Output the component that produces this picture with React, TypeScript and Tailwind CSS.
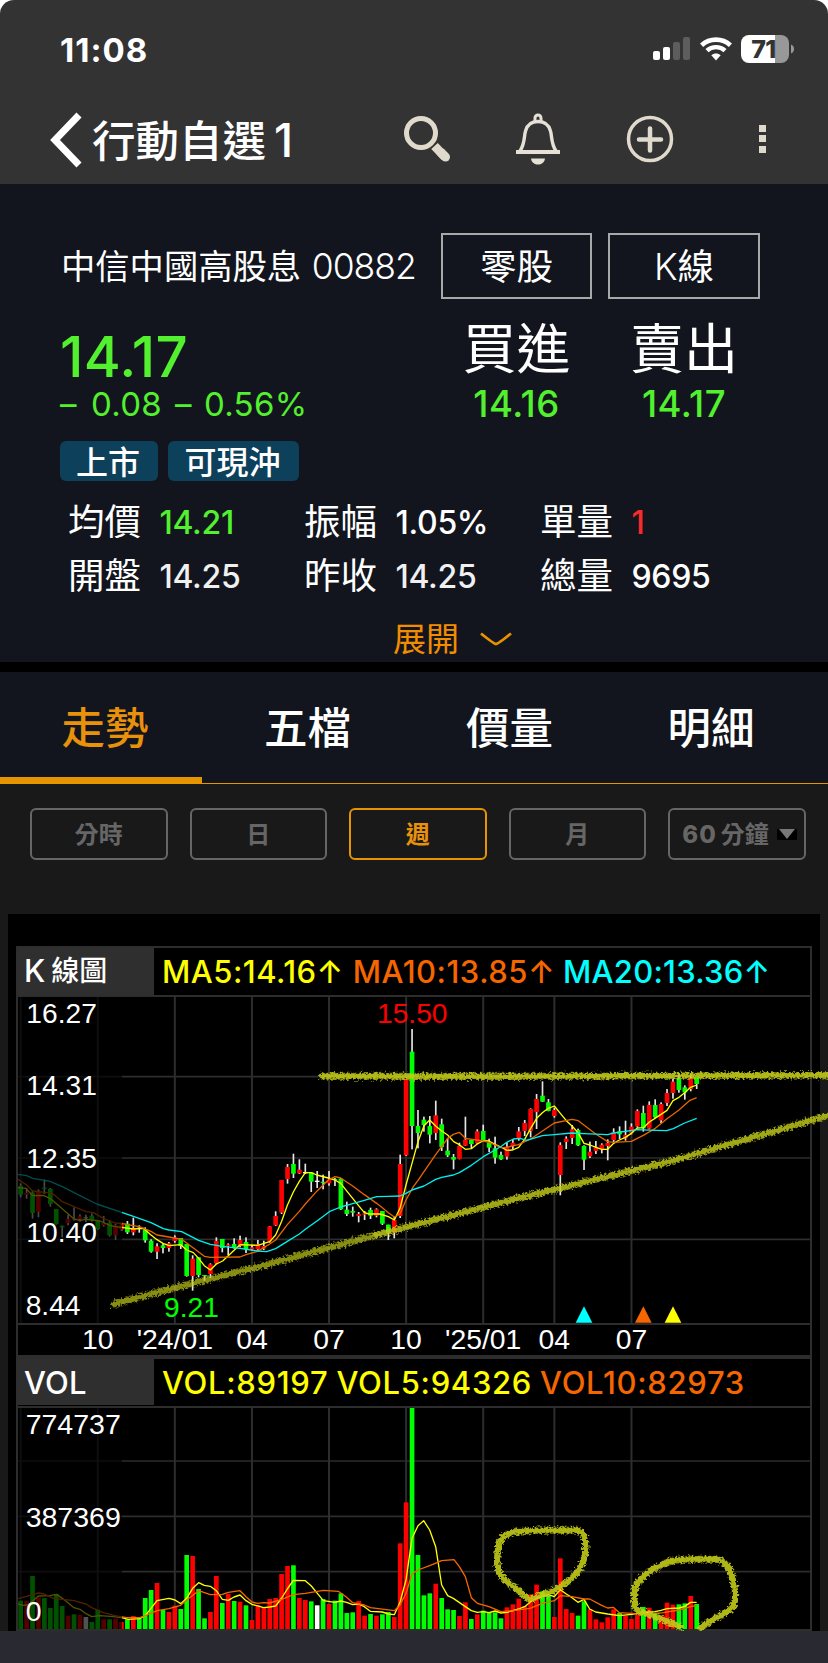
import React from 'react';

type Candle = [number, number, number, number, string];

// [high, body top, body bottom, low, colour], one per week
const candles: Candle[] = [
  [490, 498, 524, 532, 'g'], [505, 518, 524, 536, 'r'], [512, 518, 579, 596, 'g'], [508, 513, 576, 592, 'r'],
  [478, 503, 507, 522, 'g'], [504, 507, 552, 560, 'g'], [567, 567, 612, 614, 'g'], [617, 617, 622, 652, 'g'],
  [584, 597, 609, 616, 'r'], [562, 596, 600, 602, 'r'], [583, 589, 597, 605, 'r'], [584, 592, 595, 606, 'w'],
  [580, 587, 600, 605, 'g'], [600, 603, 627, 630, 'g'], [588, 609, 616, 620, 'r'], [600, 608, 646, 650, 'g'],
  [612, 616, 646, 660, 'r'], [608, 614, 628, 633, 'r'], [603, 611, 637, 642, 'g'], [593, 624, 637, 646, 'r'],
  [616, 623, 627, 638, 'g'], [622, 628, 661, 668, 'g'], [658, 662, 695, 698, 'g'], [670, 679, 695, 717, 'r'],
  [672, 676, 684, 700, 'g'], [666, 670, 684, 695, 'r'], [646, 653, 663, 668, 'r'], [654, 654, 678, 687, 'g'],
  [672, 672, 768, 770, 'g'], [706, 716, 768, 812, 'r'], [712, 712, 765, 772, 'g'], [765, 765, 768, 782, 'g'],
  [730, 733, 762, 774, 'r'], [652, 663, 730, 733, 'r'], [657, 657, 684, 697, 'g'], [670, 674, 678, 705, 'r'],
  [655, 672, 682, 686, 'g'], [647, 660, 678, 682, 'r'], [652, 666, 688, 699, 'g'], [675, 682, 688, 692, 'r'],
  [660, 673, 688, 692, 'r'], [662, 678, 686, 690, 'r'], [618, 619, 664, 668, 'r'], [574, 588, 616, 618, 'r'],
  [480, 480, 578, 582, 'r'], [432, 441, 477, 491, 'r'], [401, 432, 461, 474, 'g'], [418, 449, 460, 462, 'r'],
  [431, 456, 460, 462, 'w'], [457, 457, 485, 516, 'g'], [453, 482, 486, 504, 'w'], [464, 485, 489, 508, 'g'],
  [453, 480, 490, 497, 'r'], [474, 477, 480, 498, 'g'], [474, 476, 568, 570, 'g'], [545, 569, 582, 588, 'g'],
  [560, 573, 578, 590, 'g'], [576, 582, 588, 607, 'r'], [573, 580, 584, 600, 'r'], [563, 570, 587, 597, 'g'],
  [565, 568, 587, 592, 'r'], [573, 573, 611, 615, 'g'], [614, 614, 638, 660, 'g'], [590, 600, 638, 655, 'r'],
  [404, 432, 588, 594, 'r'], [177, 177, 406, 408, 'r'], [27, 95, 318, 388, 'g'], [270, 318, 339, 385, 'g'],
  [290, 299, 315, 335, 'g'], [288, 318, 344, 370, 'g'], [242, 286, 339, 360, 'r'], [296, 313, 381, 393, 'g'],
  [355, 392, 406, 411, 'g'], [402, 411, 419, 448, 'g'], [368, 378, 417, 418, 'r'], [290, 359, 377, 378, 'r'],
  [358, 360, 372, 384, 'g'], [328, 334, 369, 372, 'r'], [314, 333, 361, 365, 'g'], [356, 368, 383, 396, 'g'],
  [350, 385, 413, 431, 'g'], [395, 405, 418, 420, 'g'], [367, 380, 410, 419, 'r'], [358, 368, 378, 388, 'r'],
  [321, 334, 356, 362, 'r'], [300, 309, 333, 348, 'r'], [265, 267, 333, 352, 'r'], [222, 237, 276, 327, 'r'],
  [184, 227, 245, 246, 'g'], [237, 247, 273, 274, 'g'], [263, 270, 288, 293, 'r'], [367, 375, 465, 526, 'r'],
  [349, 356, 366, 387, 'r'], [315, 328, 354, 372, 'r'], [326, 330, 376, 378, 'g'], [376, 378, 419, 450, 'g'],
  [365, 395, 409, 414, 'r'], [363, 382, 393, 402, 'r'], [370, 374, 387, 400, 'r'], [358, 369, 378, 421, 'r'],
  [325, 336, 360, 367, 'r'], [319, 334, 343, 357, 'g'], [302, 345, 355, 362, 'r'], [310, 320, 339, 343, 'r'],
  [268, 273, 319, 323, 'r'], [257, 279, 325, 335, 'g'], [244, 255, 326, 328, 'r'], [238, 255, 292, 295, 'g'],
  [247, 252, 301, 309, 'r'], [207, 219, 249, 258, 'r'], [175, 185, 219, 236, 'r'], [160, 175, 210, 218, 'g'],
  [196, 202, 217, 239, 'g'], [162, 175, 207, 214, 'r'], [172, 172, 192, 207, 'g'],
];

const volumes =
  '752g 752r 678g 742r 744g 774g 733g 768g 797r 793g 794r 801w 816g 779g 808r 808g 806r 816r 808g 798r 803g 744g 720g 699r 780g 786r 767r 777g 615g 618r 717g 805g 786r 678r 759g 732r 753g 755r 766g 810r 765r 771r 747r 744r 672r 648r 646g 744r 750r 754g 766w 747g 762r 752g 730g 789g 787g 753r 797r 792g 797r 793g 786g 801r 580r 457r 174g 615g 736g 730g 701r 744g 778g 780g 798r 757r 807g 793r 782g 786g 787g 805g 772r 763r 746r 768r 733r 704r 724g 738g 801r 625r 777r 789r 797g 754g 778r 808r 817r 802r 778r 789g 797r 807r 795r 771g 773r 788g 797r 758r 764r 763g 760g 738r 762g'.split(' ');

const ma5 =
  '54,503 78,505 98,527 130,526 150,535 185,565 222,597 240,601 258,598 300,603 330,616 345,620 365,622 400,627 430,625 453,645 471,659 489,670 507,677 542,674 560,690 580,698 596,715 613,737 631,750 649,732 668,723 720,674 773,676 809,665 827,645 845,604 862,556 880,516 898,484 916,458 934,458 950,465 985,474 1005,480 1022,490 1058,535 1093,578 1108,582 1140,582 1165,590 1183,600 1200,565 1218,495 1236,430 1254,365 1272,317 1289,300 1307,318 1325,333 1343,345 1361,365 1378,374 1396,388 1414,386 1432,372 1450,362 1467,363 1485,373 1503,381 1521,391 1538,390 1556,382 1574,358 1592,325 1610,295 1627,278 1645,265 1663,258 1681,280 1699,302 1716,318 1734,338 1752,370 1770,375 1788,382 1805,388 1823,388 1841,370 1858,360 1876,352 1894,340 1912,324 1930,323 1948,306 1965,295 1983,283 2001,271 2019,242 2037,232 2054,218 2072,202 2090,195';
const ma10 =
  '54,478 80,495 98,513 133,517 155,518 187,545 222,560 258,575 280,578 310,595 345,609 365,610 382,614 418,620 453,634 471,645 507,651 545,658 580,684 613,709 631,712 720,711 738,704 773,694 809,672 827,660 862,614 898,574 916,552 952,512 985,480 1005,470 1022,474 1058,498 1093,524 1130,550 1147,563 1165,578 1183,591 1200,582 1218,540 1240,500 1254,481 1307,404 1343,355 1360,343 1378,337 1396,355 1450,363 1470,368 1485,375 1503,383 1520,382 1555,374 1592,357 1663,309 1716,298 1735,302 1787,342 1823,365 1841,367 1894,364 1930,346 1966,325 2000,297 2036,271 2070,241 2090,233';
const ma20 =
  '54,463 80,467 98,475 150,484 187,500 240,527 290,552 365,577 400,589 453,608 490,626 507,630 545,635 596,661 631,673 667,679 720,685 773,693 800,695 827,686 862,664 898,642 916,628 952,602 988,575 1022,561 1058,551 1093,541 1130,530 1165,529 1200,528 1218,520 1236,510 1272,498 1307,478 1325,472 1360,465 1378,458 1414,436 1450,410 1485,390 1505,378 1520,367 1540,357 1560,355 1580,361 1627,347 1663,344 1716,339 1752,341 1823,344 1841,339 1912,329 1966,331 2000,332 2020,326 2054,309 2090,295';
const vol5 =
  '54,762 70,766 85,764 115,738 150,737 170,733 187,745 204,758 222,773 240,778 258,791 275,800 300,797 340,800 365,803 385,808 418,806 436,797 453,775 471,752 507,745 525,750 542,761 560,745 578,715 596,698 613,706 631,709 649,722 667,748 685,751 702,741 720,735 738,752 756,763 791,773 809,771 827,768 845,744 862,717 880,691 916,692 934,708 952,730 970,752 1005,757 1022,753 1040,757 1058,764 1075,762 1093,770 1111,784 1147,786 1165,792 1183,794 1200,757 1218,690 1236,565 1254,527 1271,512 1289,540 1307,590 1325,705 1343,737 1360,745 1396,770 1414,782 1432,787 1450,785 1467,788 1485,783 1503,789 1521,787 1556,777 1574,770 1592,755 1610,744 1645,734 1663,740 1681,719 1699,732 1716,743 1734,757 1752,748 1769,777 1787,786 1823,792 1858,797 1894,793 1947,786 1965,785 1983,781 2001,776 2037,774 2054,769 2072,757 2090,757';
const vol10 =
  '54,746 80,739 115,729 133,732 160,745 187,748 222,752 258,762 275,773 310,788 345,797 380,803 420,803 436,797 471,782 507,776 542,766 560,750 596,722 631,734 667,733 685,727 720,722 738,740 756,756 773,760 791,758 809,759 845,748 880,734 916,730 970,721 1015,724 1040,742 1058,758 1093,765 1111,773 1183,782 1200,765 1218,730 1236,672 1254,660 1289,647 1325,632 1362,629 1378,650 1396,680 1414,743 1432,760 1467,770 1503,785 1540,782 1590,775 1627,760 1663,752 1681,737 1716,740 1752,747 1769,747 1805,766 1823,774 1840,772 1858,788 1947,793 1990,788 2037,780 2072,770 2090,766';

const colors: Record<string, string> = { r: '#ff0000', g: '#00ff00', w: '#ffffff' };
const gridWeeks = [0, 13, 26, 39, 52, 65, 78, 90, 103];
const weekX = (i: number) => 62 + i * 17.79;

function GridLines({ top, bottom, rows }: { top: number; bottom: number; rows: number[] }) {
  return (
    <g stroke="#2d2d2d">
      {rows.map((y) => <line key={y} x1={54} x2={2430} y1={y} y2={y} strokeWidth={5} />)}
      {gridWeeks.map((i) => <line key={i} x1={weekX(i)} x2={weekX(i)} y1={top} y2={bottom} strokeWidth={6} />)}
    </g>
  );
}

function PriceChart() {
  return (
    <svg width="792" height="326" viewBox="54 -69 2376 978">
      <GridLines top={-69} bottom={909} rows={[170, 414, 658]} />
      {candles.map(([high, top, bottom, low, c], i) => (
        <g key={i}>
          <rect x={weekX(i) - 2.5} y={high} width={5} height={low - high} fill="#e4e4e4" />
          <rect x={weekX(i) - 7} y={top} width={14} height={bottom - top} fill={colors[c]} />
        </g>
      ))}
      <g fill="none" strokeWidth={4} strokeLinejoin="round">
        <polyline points={ma5} stroke="#ffff00" />
        <polyline points={ma10} stroke="#e86400" />
        <polyline points={ma20} stroke="#00f0f0" />
      </g>
      <rect x={54} y={-69} width={312} height={978} fill="#000" opacity={0.68} />
      <path d="M1752 859l25 49h-50z" fill="#00ffff" />
      <path d="M1930 859l25 49h-50z" fill="#f56600" />
      <path d="M2019 859l25 49h-50z" fill="#ffff00" />
      <g fill="#fff" fontSize={84.5} fontFamily='"Liberation Sans", Arial, sans-serif'>
        <text x={79} y={8}>16.27</text>
        <text x={79} y={224}>14.31</text>
        <text x={79} y={443}>12.35</text>
        <text x={79} y={665}>10.40</text>
        <text x={77} y={884}>8.44</text>
        <text x={1131} y={8} fill="#ff0000">15.50</text>
        <text x={492} y={890} fill="#00ff00">9.21</text>
      </g>
    </svg>
  );
}

function TimeAxis() {
  const labels = ['', '10', "'24/01", '04', '07', '10', "'25/01", '04', '07'];
  return (
    <svg width="792" height="30" viewBox="54 0 2376 90" className="border-t-2 border-[#2d2d2d] box-content">
      {labels.map((label, n) => (
        <text key={n} x={weekX(gridWeeks[n])} y={71} textAnchor="middle" fill="#fff" fontSize={85} fontFamily='"Liberation Sans", Arial, sans-serif'>
          {label}
        </text>
      ))}
    </svg>
  );
}

function VolumeChart() {
  return (
    <svg width="792" height="221" viewBox="54 174 2376 663">
      <GridLines top={174} bottom={837} rows={[333, 499, 665]} />
      {volumes.map((v, i) => {
        const top = parseInt(v);
        return <rect key={i} x={weekX(i) - 7} y={top} width={14} height={837 - top} fill={colors[v[3]]} />;
      })}
      <g fill="none" strokeWidth={4} strokeLinejoin="round">
        <polyline points={vol5} stroke="#ffff00" />
        <polyline points={vol10} stroke="#f56600" />
      </g>
      <rect x={54} y={174} width={312} height={663} fill="#000" opacity={0.68} />
      <g fill="#fff" fontSize={85.5} fontFamily='"Liberation Sans", Arial, sans-serif'>
        <text x={77} y={251}>774737</text>
        <text x={77} y={530}>387369</text>
        <text x={77} y={812}>0</text>
      </g>
    </svg>
  );
}

// hand drawn marker strokes: trend lines and circled volume areas
function MarkerStrokes() {
  return (
    <svg width="828" height="717" viewBox="0 0 2484 2151" className="absolute left-0 top-0 pointer-events-none">
      <defs>
        <filter id="crayon" filterUnits="userSpaceOnUse" x="0" y="0" width="2484" height="2151" colorInterpolationFilters="sRGB">
          <feTurbulence type="fractalNoise" baseFrequency="0.15" numOctaves="2" seed="4" result="n" />
          <feDisplacementMap in="SourceGraphic" in2="n" scale="22" xChannelSelector="R" yChannelSelector="G" />
        </filter>
      </defs>
      <g filter="url(#crayon)" fill="none" stroke="#c3cc1a" strokeWidth={19} strokeLinecap="round" strokeLinejoin="round" opacity={0.9}>
        <path d="M966 486L1500 487L2500 483" />
        <path d="M342 1170L500 1127L780 1057L1130 962" opacity={0.78} />
        <path d="M1130 962L1530 859L2010 742L2500 600" opacity={0.92} />
        <g transform="translate(1240 1307)">
          <path d="M347 750C325 728 300 712 272 688C248 665 250 630 254 595C260 560 285 545 330 544L400 542C450 542 480 539 497 544C518 552 517 590 515 610C512 660 470 695 430 718C405 735 365 740 347 750" />
          <path d="M800 831C760 815 720 795 682 787C660 780 659 740 666 712C680 680 730 645 785 632C830 627 880 628 915 630C950 638 958 685 964 715C968 755 965 775 935 790C910 805 885 815 862 835" />
        </g>
      </g>
    </svg>
  );
}

function StatusBar() {
  return (
    <div className="flex h-[98px] items-center justify-between pl-[60px] pr-[33px] text-white">
      <span className="pt-[3px] text-[33px] font-bold leading-none tracking-[1px]">11:08</span>
      <div className="flex items-center">
        <svg width="38" height="24" viewBox="0 0 38 24">
          <rect x="0" y="14" width="7" height="9" rx="2" fill="#fff" />
          <rect x="10" y="10" width="7" height="13" rx="2" fill="#fff" />
          <rect x="20" y="5" width="7" height="18" rx="2" fill="#5d5d5d" />
          <rect x="30" y="0" width="7" height="23" rx="2" fill="#5d5d5d" />
        </svg>
        <svg width="32" height="24" viewBox="0 0 32 24" className="ml-[9px]">
          <path d="M1.6 8.2C9.6.8 22.4.8 30.4 8.2" fill="none" stroke="#fff" strokeWidth="4.6" />
          <path d="M7 13.6c5-4.7 13-4.7 18 0" fill="none" stroke="#fff" strokeWidth="4.4" />
          <path d="M16 23.5l-4.7-5.2c2.7-2.3 6.7-2.3 9.4 0z" fill="#fff" />
        </svg>
        <svg width="54" height="28" viewBox="0 0 54 28" className="ml-[9px]">
          <path d="M8 0h26v28H8a8 8 0 0 1-8-8V8a8 8 0 0 1 8-8z" fill="#fff" />
          <path d="M34 0h6a8 8 0 0 1 8 8v12a8 8 0 0 1-8 8h-6z" fill="#989898" />
          <path d="M50 9.5c4 1.5 4 7.5 0 9z" fill="#989898" />
          <text x="22.5" y="22.8" textAnchor="middle" fontSize="25" fontWeight="800" fill="#333" letterSpacing="-0.5">71</text>
        </svg>
      </div>
    </div>
  );
}

function NavBar() {
  return (
    <div className="flex h-[86px] items-center pl-[50px]">
      <svg width="34" height="56" viewBox="0 0 34 56" className="-mt-[3px]">
        <path d="M29 3L5 28l24 25" fill="none" stroke="#fff" strokeWidth="7" />
      </svg>
      <h1 className="-mt-[2px] ml-[8px] w-[311px] whitespace-nowrap text-[43.5px] font-medium leading-none text-white">行動自選<span className="ml-[8px] text-[46px]">1</span></h1>
      <svg width="48" height="48" viewBox="0 0 48 48" className="-mt-[4px]">
        <circle cx="18" cy="18" r="14.5" fill="none" stroke="#e0dacd" strokeWidth="5" />
        <path d="M31.5 31L42 42" stroke="#e0dacd" strokeWidth="9" />
        <path d="M38 37.5L42.5 42" stroke="#e0dacd" strokeWidth="9" strokeLinecap="round" />
      </svg>
      <svg width="46" height="54" viewBox="0 0 46 54" className="-mt-[5px] ml-[64px]">
        <path d="M20 10V6a3 3 0 0 1 6 0v4" fill="none" stroke="#e6e1d6" strokeWidth="3" />
        <path d="M5 39C10 32 9 24 10.5 19C12.5 11.5 17 9.5 23 9.5s10.5 2 12.5 9.5C37 24 36 32 41 39" fill="none" stroke="#e6e1d6" strokeWidth="3.4" />
        <path d="M1 40h44" stroke="#e6e1d6" strokeWidth="4" />
        <path d="M16 46.5h14c-1 8-13 8-14 0z" fill="#e6e1d6" />
      </svg>
      <svg width="48" height="48" viewBox="0 0 48 48" className="-mt-[5px] ml-[65px]">
        <circle cx="24" cy="24" r="21.5" fill="none" stroke="#e0dacd" strokeWidth="3.5" />
        <path d="M24 13.5v22M13 24.5h22" stroke="#e0dacd" strokeWidth="4.5" strokeLinecap="round" />
      </svg>
      <div className="-mt-[5px] ml-[85px] flex flex-col gap-[3.5px]">
        <i className="size-[7px] bg-[#e0dacd]" />
        <i className="size-[7px] bg-[#e0dacd]" />
        <i className="size-[7px] bg-[#e0dacd]" />
      </div>
    </div>
  );
}

const stats = [
  ['均價', '14.21', 'text-[#52f02f]'],
  ['振幅', '1.05%', 'text-white'],
  ['單量', '1', 'text-[#f62b2b]'],
  ['開盤', '14.25', 'text-[#f0f0f0]'],
  ['昨收', '14.25', 'text-[#f0f0f0]'],
  ['總量', '9695', 'text-white'],
];

function Quote() {
  return (
    <section className="flex h-[478px] flex-col bg-[#12151d] pl-[60px] pt-[49px] text-white">
      <div className="flex h-[66px] items-center">
        <h2 className="w-[381px] whitespace-nowrap pl-px pt-[2px] text-[34.3px] font-normal leading-none">中信中國高股息 <span className="ml-px text-[35.5px] font-light tracking-[-1px]">00882</span></h2>
        <button className="h-[66px] w-[151px] border-2 border-[#a8a8a8] pt-[2px] text-[36.5px] font-normal leading-none">零股</button>
        <button className="ml-[16px] h-[66px] w-[152px] border-2 border-[#a8a8a8] pt-[2px] text-[36.5px] font-normal leading-none"><span className="font-light">K</span>線</button>
      </div>
      <div className="mt-[16px] flex h-[112px]">
        <div className="w-[381px] text-[#52f02f]">
          <div className="pt-[14px] text-[56.5px] font-medium leading-[56px] tracking-[0.3px]">14.17</div>
          <div className="mt-[2px] flex text-[33px] leading-[35px] tracking-[0.3px]">
            <span className="w-[31px]">–</span>
            <span className="w-[84px]">0.08</span>
            <span className="w-[29px]">–</span>
            <span>0.56%</span>
          </div>
        </div>
        <div className="w-[151px] text-center">
          <div className="pt-[7px] text-[54px] font-normal leading-[56px]">買進</div>
          <div className="mt-[8px] text-[36.5px] font-medium leading-[36px] tracking-[0.5px] text-[#52f02f]">14.16</div>
        </div>
        <div className="ml-[16px] w-[152px] text-center">
          <div className="pt-[7px] text-[54px] font-normal leading-[56px]">賣出</div>
          <div className="mt-[8px] text-[36.5px] font-medium leading-[36px] tracking-[0.5px] text-[#52f02f]">14.17</div>
        </div>
      </div>
      <div className="mt-[17px] flex gap-[10px]">
        <span className="flex h-[40px] w-[98px] items-center justify-center rounded-[6px] bg-[#0d415b] pr-[2px] pt-[3px] text-[32px] font-medium leading-none">上市</span>
        <span className="flex h-[40px] w-[131px] items-center justify-center rounded-[6px] bg-[#0d415b] pr-[2px] pt-[3px] text-[32px] font-medium leading-none">可現沖</span>
      </div>
      <div className="mt-[14px] grid grid-cols-[236px_236px_236px] pl-[8px]">
        {stats.map(([label, value, color]) => (
          <div key={label} className="flex h-[54px] items-center">
            <span className="w-[91.5px] text-[36.5px] font-normal leading-none">{label}</span>
            <span className={`pt-[2px] text-[32px] font-medium leading-none tracking-[-0.3px] ${color}`}>{value}</span>
          </div>
        ))}
      </div>
      <button className="mt-[13px] flex items-center self-start pl-[333px] text-[33px] font-normal leading-[46px] text-[#f38d00]">
        展開
        <svg width="34" height="16" viewBox="0 0 34 16" className="ml-[20px]">
          <path d="M2 2.5Q15 13 17 13T32 2.5" fill="none" stroke="#e89200" strokeWidth="2.8" />
        </svg>
      </button>
    </section>
  );
}

const periods = ['分時', '日', '週', '月'];

export default function App() {
  return (
    <div className="h-[1663px] w-[828px] overflow-hidden bg-white font-[Inter,'Noto_Sans_CJK_TC',sans-serif]">
      <header className="h-[184px] rounded-t-[14px] bg-[#333333]">
        <StatusBar />
        <NavBar />
      </header>
      <Quote />
      <nav className="grid h-[122px] grid-cols-[202px_202px_202px_222px] border-b border-[#e69500] bg-[#12151d]">
        {['走勢', '五檔', '價量', '明細'].map((tab, i) => (
          <button
            key={tab}
            className={`border-t-[10px] border-t-black text-[43.5px] font-medium leading-none ${
              i === 0 ? 'border-b-[6px] border-b-[#e69500] pl-[8px] pt-[9px] text-[#e8920c]' : i === 3 ? 'pr-[12px] pt-[3px] text-white' : 'pl-[9px] pt-[3px] text-white'
            }`}
          >
            {tab}
          </button>
        ))}
      </nav>
      <div className="flex h-[130px] gap-[22px] bg-[#191919] pl-[30px] pt-[24px] text-[24px] font-bold leading-none text-[#666]">
        {periods.map((p) => (
          <button key={p} className={`h-[52px] w-[137.5px] rounded-[6px] border-2 pt-px ${p === '週' ? 'border-[#e69500] text-[#e8920c]' : 'border-[#666]'}`}>{p}</button>
        ))}
        <button className="flex h-[52px] w-[138px] items-center justify-center whitespace-nowrap rounded-[6px] border-2 border-[#666] pl-[5px] pt-px">
          <span className="mr-[4px] font-extrabold tracking-[1px]">60</span>分鐘
          <svg width="20" height="11" viewBox="0 0 20 11" className="ml-[8px]">
            <rect width="20" height="11" fill="#000" />
            <path d="M2 0h16l-8 10z" fill="#777" />
          </svg>
        </button>
      </div>
      <section className="relative h-[717px] bg-[#191919] px-[8px]">
        <div className="h-[717px] bg-black px-[8px] pt-[32px]">
          <div className="w-[796px] border-2 border-[#2d2d2d] text-[31px] font-medium leading-none">
            <div className="flex h-[49px] items-center whitespace-nowrap border-b-2 border-[#2d2d2d] tracking-[0.5px]">
              <div className="flex h-full w-[136px] items-center bg-[#2f2f2f] pb-[2px] pl-[6px] text-[28px] tracking-normal text-white"><span className="mr-[6px] text-[31px]">K</span>線圖</div>
              <span className="ml-[8px] text-[#ffff00]">MA5:14.16↑</span>
              <span className="ml-[9px] text-[#f56600]">MA10:13.85↑</span>
              <span className="ml-[8px] tracking-[0.25px] text-[#00ffff]">MA20:13.36↑</span>
            </div>
            <PriceChart />
            <TimeAxis />
            <div className="flex h-[53px] items-center whitespace-nowrap border-b-2 border-t-4 border-[#2d2d2d] pb-px tracking-[0.7px]">
              <div className="flex h-full w-[136px] items-center bg-[#2f2f2f] pl-[6px] tracking-[0.2px] text-white">VOL</div>
              <span className="ml-[8px] text-[#ffff00]">VOL:89197</span>
              <span className="ml-[8px] text-[#ffff00]">VOL5:94326</span>
              <span className="ml-[8px] text-[#f56600]">VOL10:82973</span>
            </div>
            <VolumeChart />
          </div>
        </div>
        <MarkerStrokes />
      </section>
      <footer className="h-[32px] bg-[#292932]" />
    </div>
  );
}
